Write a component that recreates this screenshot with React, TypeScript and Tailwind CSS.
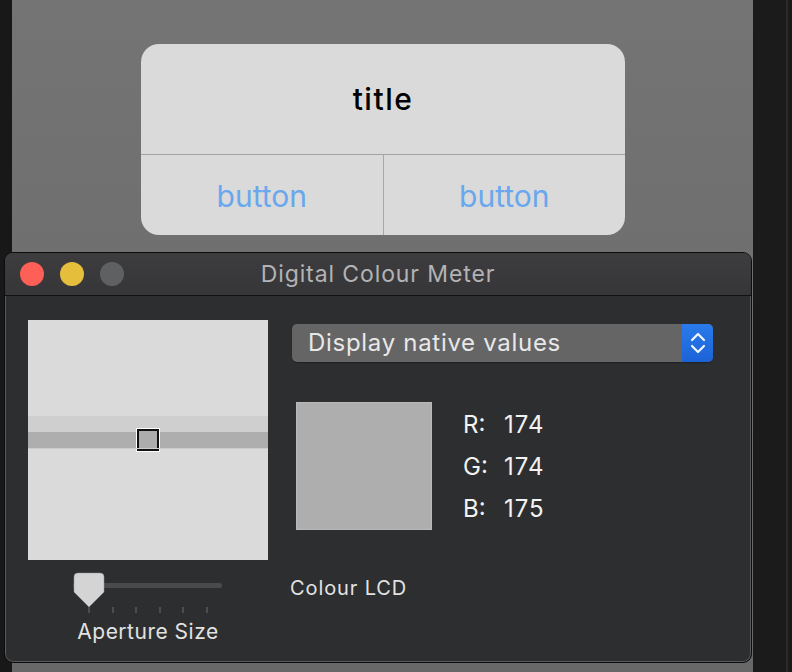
import React from "react";

const font = { fontFamily: "Inter, 'Liberation Sans', sans-serif" };

function Slider() {
  const ticks = [61, 85, 108, 132, 155, 179];
  return (
    <svg width="240" height="48" viewBox="0 0 240 48" className="block">
      <rect x="45" y="15" width="149" height="5" rx="2.5" fill="#4a4a4c" />
      {ticks.map((x) => (
        <rect key={x} x={x - 0.5} y="39" width="1" height="6" fill="#6d6d6f" />
      ))}
      <path
        d="M50 5 H72 Q76 5 76 9 V24 L61 39 L46 24 V9 Q46 5 50 5 Z"
        fill="#d4d4d4"
        stroke="#9a9a9a"
        strokeWidth="0.5"
      />
    </svg>
  );
}

function Stepper() {
  return (
    <svg width="20" height="28" viewBox="0 0 20 28" fill="none">
      <path d="M4 11 L10 5 L16 11" stroke="#f2f6ff" strokeWidth="2.2" strokeLinecap="round" strokeLinejoin="round" />
      <path d="M4 17 L10 23 L16 17" stroke="#f2f6ff" strokeWidth="2.2" strokeLinecap="round" strokeLinejoin="round" />
    </svg>
  );
}

export default function App() {
  return (
    <div className="relative flex w-[792px] h-[672px] overflow-hidden bg-[#181818]" style={font}>
      {/* left edge */}
      <div className="w-[12px] bg-[#181818]" />

      {/* simulator area */}
      <div className="w-[741px] bg-gradient-to-b from-[#747474] to-[#686868] pt-[44px]">
        <div className="ml-[129px] w-[484px] h-[191px] rounded-[18px] bg-[#dadada] flex flex-col overflow-hidden">
          <div className="h-[110px] flex items-center justify-center text-[30px] font-medium tracking-[1.5px] text-black">
            title
          </div>
          <div className="h-px bg-[#a2a2a2]" />
          <div className="flex flex-1">
            <div className="flex-1 flex items-center justify-center pt-[2px] text-[30px] text-[#69a7ee]">button</div>
            <div className="w-px bg-[#a8a8a8]" />
            <div className="flex-1 flex items-center justify-center pt-[2px] text-[30px] text-[#69a7ee]">button</div>
          </div>
        </div>
      </div>

      {/* right edge */}
      <div className="flex-1 flex justify-end pr-[4px] bg-[#1b1b1b]">
        <div className="w-[2px] bg-[#2c2c2c]" />
      </div>

      {/* Digital Colour Meter window */}
      <div className="absolute left-[4px] top-[252px] w-[748px] h-[411px] rounded-[9px] border border-[#0c0c0c] bg-[#2d2e30] shadow-[inset_0_0_0_1px_#5a5a5c] flex flex-col overflow-hidden">
        <div className="relative h-[43px] shrink-0 border-b border-[#111] bg-gradient-to-b from-[#3d3d3f] to-[#363638] flex items-center justify-center">
          <div className="absolute left-[15px] top-[9px] flex gap-[16px]">
            <div className="w-[24px] h-[24px] rounded-full bg-[#fe5f57]" />
            <div className="w-[24px] h-[24px] rounded-full bg-[#e5bf3c]" />
            <div className="w-[24px] h-[24px] rounded-full bg-[#5f6062]" />
          </div>
          <span className="text-[23px] text-[#b3b3b5] tracking-[0.9px]">Digital Colour Meter</span>
        </div>

        <div className="flex pl-[23px] pt-[24px] gap-[24px]">
          {/* left column */}
          <div className="w-[240px] flex flex-col">
            <div className="w-[240px] h-[240px] bg-[#dadada] flex flex-col pt-[96px]">
              <div className="h-[16px] bg-[#cfcfcf]" />
              <div className="h-[16px] bg-[#aeaeae] flex justify-center items-center">
                <div className="w-[24px] h-[24px] border border-white bg-white">
                  <div className="w-full h-full border-2 border-[#111] bg-[#acacac]" />
                </div>
              </div>
              <div className="h-px bg-[#cbcbcb]" />
            </div>
            <div className="mt-[8px]">
              <Slider />
            </div>
            <div className="mt-[4px] text-center text-[21px] leading-[24px] tracking-[0.5px] text-[#e2e2e2]">Aperture Size</div>
          </div>

          {/* right column */}
          <div className="flex flex-col pt-[4px]">
            <div className="w-[421px] h-[38px] rounded-[5px] bg-[#656566] flex overflow-hidden shadow-[0_1px_1px_rgba(0,0,0,0.3)]">
              <div className="flex-1 flex items-center pl-[16px] text-[24px] tracking-[0.7px] text-[#e8e8e8]">Display native values</div>
              <div className="w-[31px] bg-gradient-to-b from-[#2a7bec] to-[#1c63d6] flex items-center justify-center">
                <Stepper />
              </div>
            </div>

            <div className="flex mt-[40px] ml-[4px]">
              <div className="w-[136px] h-[128px] bg-[#aeaeae] border border-[#b9b9b9]" />
              <div className="ml-[31px] flex flex-col pt-[2px] text-[24px] leading-[42px] text-[#f2f2f2]">
                <div className="flex"><span className="w-[22px] text-right">R:</span><span className="ml-[19px] tracking-[1px]">174</span></div>
                <div className="flex"><span className="w-[22px] text-right">G:</span><span className="ml-[19px] tracking-[1px]">174</span></div>
                <div className="flex"><span className="w-[22px] text-right">B:</span><span className="ml-[19px] tracking-[1px]">175</span></div>
              </div>
            </div>

            <div className="mt-[46px] -ml-[2px] text-[20px] leading-[24px] tracking-[0.9px] text-[#e2e2e2]">Colour LCD</div>
          </div>
        </div>
      </div>
    </div>
  );
}
